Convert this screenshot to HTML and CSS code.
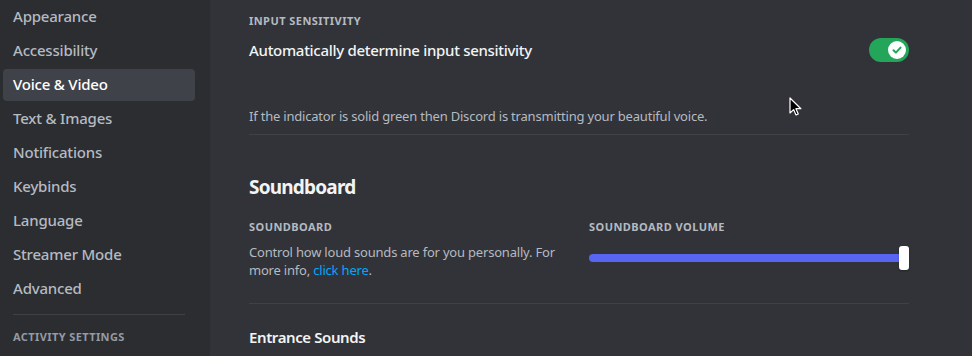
FILE: index.html
```html
<!DOCTYPE html>
<html lang="en">
<head>
    <meta charset="UTF-8">
    <title>Voice &amp; Video Settings</title>
    <link rel="stylesheet" href="styles.css">
</head>
<body>
    <div class="app">
        <nav class="sidebar">
            <div class="nav-item">Appearance</div>
            <div class="nav-item">Accessibility</div>
            <div class="nav-item selected">Voice &amp; Video</div>
            <div class="nav-item">Text &amp; Images</div>
            <div class="nav-item">Notifications</div>
            <div class="nav-item">Keybinds</div>
            <div class="nav-item">Language</div>
            <div class="nav-item">Streamer Mode</div>
            <div class="nav-item">Advanced</div>
            <div class="nav-sep"></div>
            <div class="nav-header">Activity Settings</div>
        </nav>
        <main class="content">
            <div class="section">
                <h5 class="label">Input Sensitivity</h5>
                <div class="switch-row">
                    <span class="switch-title">Automatically determine input sensitivity</span>
                    <div class="toggle">
                        <div class="knob">
                            <svg width="12" height="12" viewBox="0 0 12 12"><path d="M2.5 6.2l2.4 2.4 4.6-5" fill="none" stroke="#23a55a" stroke-width="2" stroke-linecap="round" stroke-linejoin="round"/></svg>
                        </div>
                    </div>
                </div>
                <p class="note">If the indicator is solid green then Discord is transmitting your beautiful voice.</p>
            </div>
            <div class="divider"></div>

            <h2 class="heading">Soundboard</h2>
            <div class="two-col">
                <div>
                    <h5 class="label">Soundboard</h5>
                    <p class="desc">Control how loud sounds are for you personally. For more info, <a href="#" class="link">click here</a>.</p>
                </div>
                <div>
                    <h5 class="label">Soundboard Volume</h5>
                    <div class="slider">
                        <div class="track"></div>
                        <div class="grabber"></div>
                    </div>
                </div>
            </div>
            <div class="divider low"></div>

            <h3 class="subheading">Entrance Sounds</h3>

            <svg class="cursor" width="13" height="19" viewBox="0 0 13 19"><path d="M1 1v15l3.6-3.4 2.4 5.4 2.3-1-2.4-5.3h5z" fill="#000" stroke="#fff" stroke-width="1.2" stroke-linejoin="round"/></svg>
        </main>
    </div>
</body>
</html>
```

FILE: styles.css
```css
body {
    margin: 0;
    font-family: "Noto Sans", "Open Sans", sans-serif;
    background: #313338;
    overflow: hidden;
}
.app {
    display: flex;
    height: 356px;
}
.sidebar {
    width: 210px;
    flex-shrink: 0;
    background: #2b2d31;
    padding: 1px 15px 0 3px;
    box-sizing: border-box;
}
.nav-item {
    height: 32px;
    line-height: 31px;
    margin-bottom: 2px;
    padding: 0 10px;
    border-radius: 4px;
    font-size: 15px;
    font-weight: 500;
    letter-spacing: -0.2px;
    color: #b5bac1;
}
.nav-item.selected {
    background: #404249;
    color: #ffffff;
}
.nav-sep {
    height: 1px;
    background: #3f4147;
    margin: 9px 10px 0;
}
.nav-header {
    padding: 14px 10px 0;
    font-size: 11px;
    font-weight: 700;
    text-transform: uppercase;
    letter-spacing: 0.4px;
    color: #949ba4;
}
.content {
    position: relative;
    flex: 1;
    padding: 13px 0 0 39px;
}
.content > * {
    width: 660px;
}
.label {
    margin: 0;
    font-size: 11px;
    line-height: 16px;
    font-weight: 700;
    text-transform: uppercase;
    letter-spacing: 0.45px;
    color: #b5bac1;
}
.switch-row {
    display: flex;
    justify-content: space-between;
    align-items: center;
    height: 24px;
    margin-top: 9px;
}
.switch-title {
    font-size: 15px;
    font-weight: 500;
    letter-spacing: -0.3px;
    color: #f2f3f5;
}
.toggle {
    width: 40px;
    height: 24px;
    border-radius: 12px;
    background: #23a55a;
    display: flex;
    align-items: center;
    justify-content: flex-end;
    padding: 0 3px;
    box-sizing: border-box;
}
.knob {
    width: 18px;
    height: 18px;
    border-radius: 50%;
    background: #ffffff;
    display: flex;
    align-items: center;
    justify-content: center;
}
.note {
    margin: 44px 0 0;
    font-size: 13px;
    line-height: 20px;
    letter-spacing: -0.2px;
    color: #b5bac1;
}
.divider {
    height: 1px;
    background: #3f4147;
    margin-top: 8px;
}
.divider.low {
    margin-top: 24px;
}
.heading {
    margin: 40px 0 0;
    font-size: 19px;
    line-height: 24px;
    font-weight: 700;
    letter-spacing: -0.8px;
    color: #f2f3f5;
}
.two-col {
    display: grid;
    grid-template-columns: 1fr 1fr;
    gap: 20px;
    margin-top: 20px;
}
.desc {
    margin: 8px 0 0;
    font-size: 13px;
    line-height: 18px;
    letter-spacing: -0.2px;
    color: #b5bac1;
}
.link {
    color: #00a8fc;
    text-decoration: none;
}
.slider {
    position: relative;
    height: 24px;
    margin-top: 11px;
    width: 320px;
}
.track {
    position: absolute;
    left: 0;
    right: 4px;
    top: 8px;
    height: 8px;
    border-radius: 4px;
    background: #5865f2;
}
.grabber {
    position: absolute;
    right: 0;
    top: 0;
    width: 10px;
    height: 24px;
    border-radius: 3px;
    background: #ffffff;
    box-shadow: 0 1px 2px rgba(0, 0, 0, 0.3);
}
.subheading {
    margin: 23px 0 0;
    font-size: 15px;
    line-height: 20px;
    font-weight: 600;
    letter-spacing: -0.4px;
    color: #f2f3f5;
}
.cursor {
    position: absolute;
    left: 579px;
    top: 97px;
    width: 13px;
}
```
